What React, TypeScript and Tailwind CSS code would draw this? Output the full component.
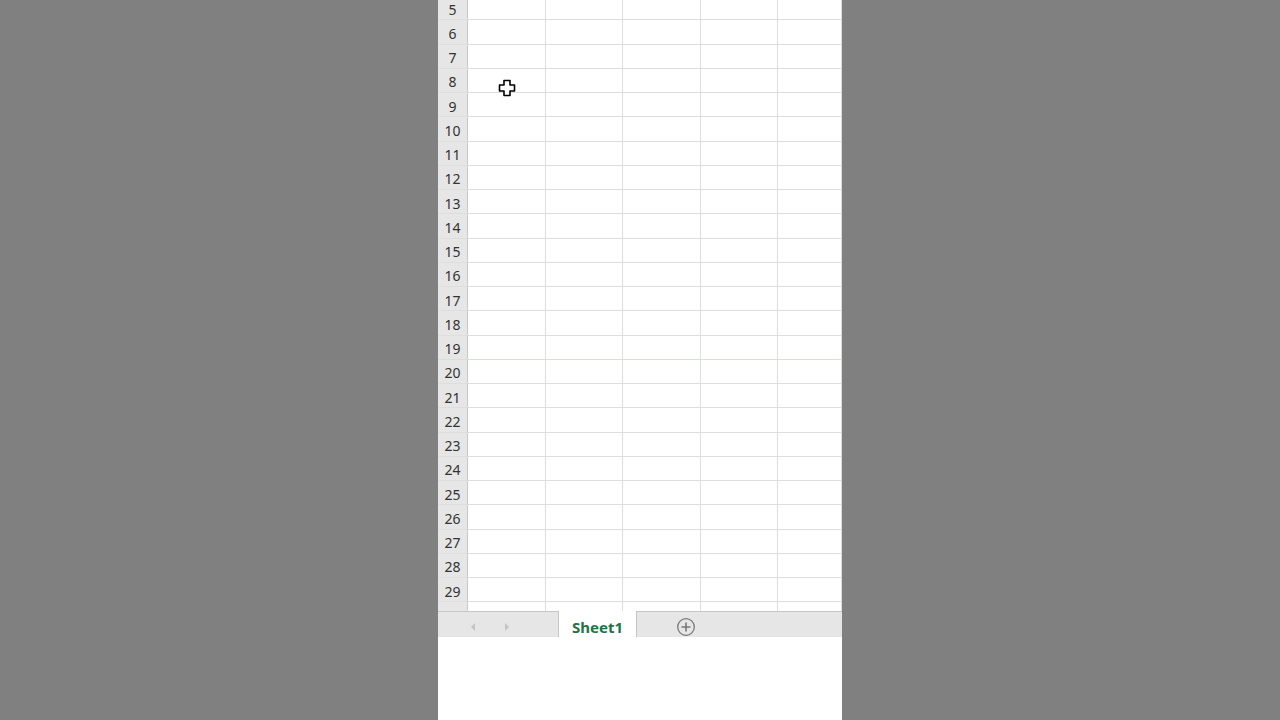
const rows = Array.from({ length: 26 }, (_, i) => i + 5);
const cols = ['w-[78px]', 'w-[77px]', 'w-[78px]', 'w-[77px]', 'w-[64px]'];

const Cursor = () => (
  <svg width="20" height="20" viewBox="0 0 20 20" className="absolute left-[59px] top-[78px]">
    <path
      d="M7 2.5h6v4.5h4.5v6H13v4.5H7V13H2.5V7H7z"
      fill="#fff"
      stroke="#000"
      strokeWidth="1.6"
      strokeLinejoin="round"
    />
  </svg>
);

export default function App() {
  return (
    <div className="flex h-[720px] w-[1280px] justify-center bg-[#808080] font-['Noto_Sans',sans-serif]">
      <div className="relative flex w-[404px] flex-col overflow-hidden bg-white">
        <div className="h-[611px] overflow-hidden">
          <div className="-mt-[4px] flex flex-col">
            {rows.map((r) => (
              <div
                key={r}
                className={`flex h-[24.25px] shrink-0 border-b ${
                  r === 19 ? 'border-[#cfe6cf]' : 'border-[#dedede]'
                }`}
              >
                <div className="flex w-[30px] shrink-0 items-center justify-center border-r border-[#c8c8c8] bg-[#e6e6e6] pt-[3px] text-[14px] text-[#333]">
                  {r}
                </div>
                {cols.map((w, i) => (
                  <div key={i} className={`${w} shrink-0 border-r border-[#dedede]`} />
                ))}
              </div>
            ))}
          </div>
        </div>
        <div className="flex h-[26px] shrink-0 items-stretch">
          <div className="flex w-[121px] items-center gap-[28px] border-t border-r border-[#c6c6c6] bg-[#e6e6e6] pt-[5px] pl-[32px] text-[#c4c4c4]">
            <svg width="6" height="8" viewBox="0 0 6 8"><path d="M5 0 1 4l4 4z" fill="currentColor" /></svg>
            <svg width="6" height="8" viewBox="0 0 6 8"><path d="M1 0l4 4-4 4z" fill="currentColor" /></svg>
          </div>
          <div className="flex w-[77px] items-center justify-center bg-white pt-[6px] text-[15px] font-bold text-[#217346]">
            Sheet1
          </div>
          <div className="flex flex-1 items-center border-t border-l border-[#c6c6c6] bg-[#e6e6e6] pt-[5px] pl-[39px]">
            <svg width="20" height="20" viewBox="0 0 20 20" className="text-[#777]">
              <circle cx="10" cy="10" r="8.3" fill="none" stroke="currentColor" strokeWidth="1.3" />
              <path d="M10 5.5v9M5.5 10h9" stroke="currentColor" strokeWidth="1.6" />
            </svg>
          </div>
        </div>
        <div className="flex-1 bg-white" />
        <Cursor />
      </div>
    </div>
  );
}
